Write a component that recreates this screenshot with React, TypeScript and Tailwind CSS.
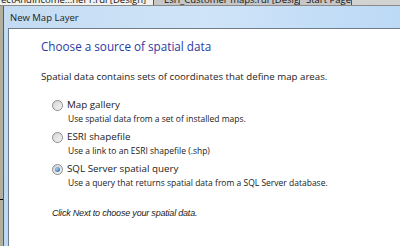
import React from 'react'

const options = [
  { label: 'Map gallery', desc: 'Use spatial data from a set of installed maps.', checked: false },
  { label: 'ESRI shapefile', desc: 'Use a link to an ESRI shapefile (.shp)', checked: false },
  { label: 'SQL Server spatial query', desc: 'Use a query that returns spatial data from a SQL Server database.', checked: true },
]

function Radio({ checked }: { checked: boolean }) {
  return (
    <span className="w-[11px] h-[11px] rounded-full border border-[#8c8c8c] bg-gradient-to-br from-[#d4d4d4] to-[#f7f7f7] flex items-center justify-center shrink-0">
      {checked && <span className="w-[5px] h-[5px] rounded-full bg-[radial-gradient(circle_at_35%_35%,#9ed0f5,#1b5a9a)]" />}
    </span>
  )
}

export default function App() {
  return (
    <div className="w-[400px] h-[246px] overflow-hidden bg-[#d4d0c8] flex flex-col font-['Open_Sans',sans-serif]">
      {/* document tabs, mostly cut off */}
      <div className="h-[6px] flex overflow-hidden bg-[#d2d2d2] border-b border-[#8a8a8a] text-[9.5px] leading-[10px] text-[#111]">
        <div className="w-[154px] shrink-0 bg-[#f2f1ec] border-r border-[#555] pl-[1px] whitespace-nowrap overflow-hidden">
          <div className="-mt-[5px]">ectAndIncome...ner1.rdl [Design]</div>
        </div>
        <div className="w-[146px] shrink-0 bg-[#c6c6c6] border-r border-[#555] pl-[10px] whitespace-nowrap overflow-hidden">
          <div className="-mt-[5px]">Esri_Customer maps.rdl [Design]</div>
        </div>
        <div className="w-[52px] shrink-0 bg-[#c6c6c6] border-r border-[#555] pl-[6px] whitespace-nowrap overflow-hidden">
          <div className="-mt-[5px]">Start Page</div>
        </div>
      </div>

      <div className="flex-1 flex">
        <div className="w-[4px] bg-[#b3af9f] border-r border-[#5b5b5b] flex flex-col">
          <div className="h-[193px]" />
          <div className="h-[1px] bg-black" />
        </div>

        {/* dialog */}
        <div className="flex-1 flex flex-col bg-gradient-to-b from-[#c0dcf5] to-[#bcd8f4]">
          <div className="h-[22px] flex items-center pl-[6px] pt-[3px] text-[9.5px] text-[#1c1c1c] bg-gradient-to-r from-[#c3dbf2] via-[#cfe4f8] to-[#bcd9f6]">
            New Map Layer
          </div>
          <div className="flex-1 ml-[4px] bg-white border-t border-l border-[#6f7b88] pl-[32px] pt-[9px]">
            <h1 className="text-[11.7px] leading-[16px] text-[#2b3aa0]">Choose a source of spatial data</h1>
            <p className="mt-[17px] text-[9.7px] leading-[12px] text-[#1a1a1a]">
              Spatial data contains sets of coordinates that define map areas.
            </p>
            <div className="mt-[15px] pl-[11px] flex flex-col gap-[4px]">
              {options.map(o => (
                <div key={o.label}>
                  <div className="flex items-center gap-[4px] h-[14px]">
                    <Radio checked={o.checked} />
                    <span className="text-[9.8px] text-[#1a1a1a]">{o.label}</span>
                  </div>
                  <div className="pl-[16px] text-[8.5px] leading-[14px] text-[#1a1a1a]">{o.desc}</div>
                </div>
              ))}
            </div>
            <p className="mt-[17px] pl-[11px] text-[9px] italic tracking-[-0.2px] text-[#1a1a1a] font-['Liberation_Sans',sans-serif]">
              Click Next to choose your spatial data.
            </p>
          </div>
        </div>
      </div>
    </div>
  )
}
